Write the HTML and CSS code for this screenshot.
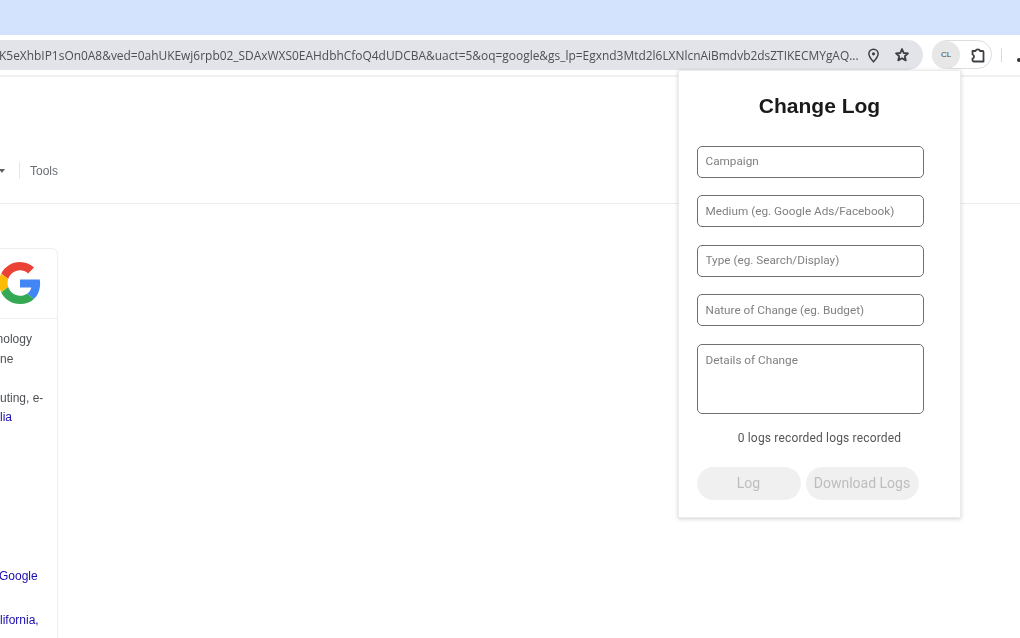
FILE: index.html
```html
<!DOCTYPE html>
<html lang="en">
<head>
<meta charset="utf-8">
<title>Change Log</title>
<link rel="stylesheet" href="styles.css">
</head>
<body>
<div class="window">
  <div class="tabstrip"></div>
  <div class="toolbar">
    <div class="omnibox">
      <span class="url">K5eXhbIP1sOn0A8&amp;ved=0ahUKEwj6rpb02_SDAxWXS0EAHdbhCfoQ4dUDCBA&amp;uact=5&amp;oq=google&amp;gs_lp=Egxnd3Mtd2l6LXNlcnAiBmdvb2dsZTIKECMYgAQ...</span>
      <svg class="omni-icon pin" viewBox="0 0 14 16"><path d="M7 1.200a5 5 0 0 0-5 5c0 3.400 5 8.600 5 8.600s5-5.200 5-8.600a5 5 0 0 0-5-5z" fill="none" stroke="#3c4043" stroke-width="1.6"/><circle cx="7" cy="6.200" r="1.700" fill="#3c4043"/></svg>
      <svg class="omni-icon star" viewBox="0 0 16 16"><path d="M8 2l1.700 4 4.300.4-3.200 2.800 1 4.200L8 11.200l-3.800 2.200 1-4.200L2 6.400 6.300 6z" fill="none" stroke="#3c4043" stroke-width="1.8" stroke-linejoin="round"/></svg>
    </div>
    <div class="ext-pill">
      <span class="ext-active">CL</span>
      <svg class="puzzle" viewBox="0 0 18 18"><path d="M3.500 5.500h3a2.400 2.400 0 0 1 4.600 0h2.400q1 0 1 1V16H5q-1.500 0-1.500-1.500V13a2 2 0 0 0 1.500-2 2 2 0 0 0-1.500-2z" fill="none" stroke="#3c4043" stroke-width="1.800" stroke-linejoin="round"/></svg>
    </div>
    <span class="tool-sep"></span>
    <span class="menu-dot"></span>
  </div>
  <main class="page">
    <div class="filters">
      <span class="caret"></span>
      <span class="filter-sep"></span>
      <span class="tools">Tools</span>
    </div>
    <section class="card">
      <div class="card-logo">
        <svg class="g-logo" viewBox="0 0 48 48">
          <path fill="#EA4335" d="M24 9.500c3.540 0 6.710 1.220 9.210 3.600l6.850-6.850C35.900 2.380 30.470 0 24 0 14.620 0 6.510 5.380 2.560 13.220l7.980 6.190C12.430 13.720 17.740 9.500 24 9.500z"/>
          <path fill="#4285F4" d="M46.980 24.550c0-1.570-.15-3.090-.38-4.550H24v9.020h12.940c-.58 2.960-2.260 5.480-4.780 7.180l7.730 6c4.510-4.180 7.090-10.360 7.090-17.650z"/>
          <path fill="#FBBC05" d="M10.530 28.590c-.48-1.450-.76-2.990-.76-4.590s.27-3.140.76-4.590l-7.980-6.190C.92 16.460 0 20.120 0 24c0 3.880.92 7.540 2.560 10.780l7.970-6.190z"/>
          <path fill="#34A853" d="M24 48c6.480 0 11.930-2.130 15.890-5.810l-7.730-6c-2.150 1.450-4.920 2.300-8.160 2.300-6.260 0-11.570-4.220-13.470-9.910l-7.980 6.190C6.510 42.620 14.620 48 24 48z"/>
        </svg>
      </div>
      <div class="card-body">
        <p class="line first">nology</p>
        <p class="line">ne</p>
        <p class="line group">uting, e-</p>
        <p class="line link">lia</p>
        <p class="line link far">Google</p>
        <p class="line link near">lifornia,</p>
      </div>
    </section>
  </main>
  <aside class="popup">
    <h1 class="popup-title">Change Log</h1>
    <form class="log-form">
      <input class="field" type="text" placeholder="Campaign">
      <input class="field" type="text" placeholder="Medium (eg. Google Ads/Facebook)">
      <input class="field" type="text" placeholder="Type (eg. Search/Display)">
      <input class="field" type="text" placeholder="Nature of Change (eg. Budget)">
      <textarea class="field details" placeholder="Details of Change"></textarea>
    </form>
    <p class="count">0 logs recorded logs recorded</p>
    <div class="actions">
      <button class="btn btn-log" type="button" disabled>Log</button>
      <button class="btn btn-download" type="button" disabled>Download Logs</button>
    </div>
  </aside>
</div>
</body>
</html>
```

FILE: styles.css
```css
* { box-sizing: border-box; }
html, body { margin: 0; padding: 0; background: #fff; }
body { width: 1020px; height: 638px; overflow: hidden; font-family: "Liberation Sans", Arial, sans-serif; }
.window { position: relative; width: 1020px; height: 638px; overflow: hidden; filter: blur(0.6px); }

.tabstrip { height: 35px; background: #d3e3fd; }
.toolbar { height: 42px; padding-top: 5px; display: flex; align-items: flex-start; border-bottom: 2px solid #f1f1f1; }
.omnibox { width: 923px; height: 30px; flex: none; display: flex; align-items: center; background: #e2e4e9; border-radius: 0 15px 15px 0; }
.url { width: 862px; flex: none; margin-left: -1px; font-family: "Open Sans", sans-serif; font-size: 11.95px; color: #4d4f52; white-space: nowrap; overflow: hidden; }
.omni-icon { flex: none; display: block; }
.pin { width: 13px; height: 15px; margin-left: 6px; }
.star { width: 16px; height: 16px; margin-left: 14px; }
.ext-pill { width: 60px; height: 29px; margin-left: 9px; flex: none; display: flex; align-items: center; border: 1px solid #dcdde0; border-radius: 15px; background: #fff; }
.ext-active { width: 28px; height: 28px; margin-left: -1px; border-radius: 50%; background: #e7e7e8; display: flex; align-items: center; justify-content: center; font-size: 8px; color: #444; }
.puzzle { width: 18px; height: 19px; margin-left: 9px; display: block; }
.tool-sep { width: 1px; height: 14px; margin: 8px 0 0 9px; background: #d5dbe6; flex: none; }
.menu-dot { width: 4px; height: 4px; margin: 18px 0 0 15px; border-radius: 50%; background: #333; flex: none; }

.page { height: 561px; }
.filters { height: 127px; padding-bottom: 24px; display: flex; align-items: flex-end; border-bottom: 1px solid #ececec; }
.caret { width: 0; height: 0; margin: 0 14px 6px -1px; border: 3.5px solid transparent; border-top: 4px solid #5f6368; border-bottom: 0; }
.filter-sep { width: 1px; height: 17px; background: #e6e6e6; }
.tools { margin-left: 10px; font-size: 12px; line-height: 16px; color: #6a6e73; }

.card { width: 58px; height: 420px; margin-top: 44px; border: 1px solid #eeeeee; border-left: 0; border-radius: 0 6px 0 0; }
.card-logo { height: 70px; padding: 13px 0 0; border-bottom: 1px solid #eeeeee; }
.g-logo { width: 42px; height: 42px; margin-left: -1px; display: block; }
.card-body { padding-top: 11px; }
.line { margin: 0; font-size: 12px; line-height: 19.5px; color: #4d5156; white-space: nowrap; }
.first { margin-left: -3.4px; }
.group { margin-top: 19.5px; }
.link { color: #1a0dab; }
.far { margin-top: 139.5px; margin-left: -1px; }
.near { margin-top: 24.5px; }

.popup { position: absolute; left: 678px; top: 70px; width: 283px; height: 448px; padding: 0 17.5px; background: #fff; border: 1px solid #ececec; box-shadow: 0 1px 4px rgba(0,0,0,.18); }
.popup-title { margin: 22px 0 0; font-size: 21px; line-height: 26px; font-weight: 700; color: #1a1a1a; text-align: center; }
.log-form { margin-top: 26.5px; display: flex; flex-direction: column; gap: 17.5px; }
.field { display: block; width: 227px; height: 32px; padding: 0 8px 1px; border: 1.5px solid #6f6f6f; border-radius: 5px; background: #fff; font-family: "Roboto", sans-serif; font-size: 11.75px; color: #333; outline: none; }
.field::placeholder { color: #808080; opacity: 1; }
.details { height: 70.5px; padding: 8px; resize: none; }
.count { margin: 16px 0 0; font-family: "Roboto", sans-serif; font-size: 12px; line-height: 16px; letter-spacing: .17px; color: #555; text-align: center; }
.actions { margin-top: 21px; display: flex; gap: 5px; }
.btn { height: 33px; border: 0; border-radius: 17px; background: #f0f0f0; color: #bdbdbd; font-family: "Roboto", sans-serif; font-size: 14px; padding: 0 0 1px; }
.btn-log { width: 104px; }
.btn-download { width: 113px; }
```
